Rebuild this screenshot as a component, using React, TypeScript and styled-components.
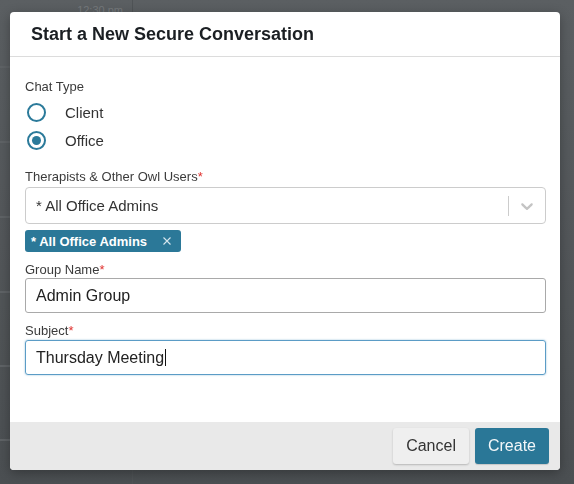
import React from "react";
import styled, { createGlobalStyle } from "styled-components";

const GlobalStyle = createGlobalStyle`
  * { box-sizing: border-box; }
  html, body { margin: 0; padding: 0; height: 100%; overflow: hidden; }
  body {
    font-family: "Liberation Sans", Arial, Helvetica, sans-serif;
    background: #53575a;
  }
`;

/* ---------- Underlying (dimmed) page ---------- */
const Page = styled.div`
  display: flex;
  height: 484px;
  background: linear-gradient(#5b5f62, #4b4f52);
`;

const Sidebar = styled.div`
  width: 133px;
  display: flex;
  flex-direction: column;
  border-right: 1px solid #4f5356;
`;

const SideRow = styled.div<{ $h: number }>`
  height: ${(p) => p.$h}px;
  flex: none;
  border-bottom: 2px solid #5f6366;
  display: flex;
  justify-content: flex-end;
  padding: 4px 9px 0 0;
`;

const Stamp = styled.span`
  font-size: 11px;
  line-height: 13px;
  color: #75797c;
`;

const MainArea = styled.div`
  flex: 1;
`;

/* ---------- Modal ---------- */
const Overlay = styled.div`
  position: fixed;
  inset: 0;
  padding: 12px 0 0 10px;
`;

const Modal = styled.div`
  width: 550px;
  height: 458px;
  background: #fff;
  border-radius: 4px;
  overflow: hidden;
  display: flex;
  flex-direction: column;
  box-shadow: 0 3px 12px rgba(0, 0, 0, 0.3);
`;

const Header = styled.div`
  height: 45px;
  flex: none;
  display: flex;
  align-items: center;
  padding: 0 0 0 21px;
  border-bottom: 1px solid #dcdcdc;
`;

const Title = styled.h1`
  margin: 0;
  font-size: 18px;
  line-height: 44px;
  font-weight: 700;
  color: #1b1f23;
`;

const Body = styled.div`
  flex: 1;
  display: flex;
  flex-direction: column;
  padding: 22px 14px 0 15px;
`;

const Label = styled.div<{ $mt?: number }>`
  font-size: 13px;
  line-height: 16px;
  color: #3b3b3b;
  margin-top: ${(p) => p.$mt ?? 0}px;
`;

const Req = styled.span`
  color: #e0322f;
`;

const RadioGroup = styled.div`
  display: flex;
  flex-direction: column;
  margin-top: 3px;
`;

const RadioRow = styled.label`
  height: 28px;
  display: flex;
  align-items: center;
  padding-left: 2px;
  gap: 19px;
  font-size: 15px;
  color: #333;
`;

const RadioCircle = styled.span<{ $checked?: boolean }>`
  width: 19px;
  height: 19px;
  border-radius: 50%;
  border: 2px solid #2b7a9a;
  display: flex;
  align-items: center;
  justify-content: center;
  flex: none;
  &::after {
    content: "";
    width: 9px;
    height: 9px;
    border-radius: 50%;
    background: ${(p) => (p.$checked ? "#2b7a9a" : "transparent")};
  }
`;

const Select = styled.div`
  margin-top: 2px;
  height: 37px;
  border: 1px solid #cccccc;
  border-radius: 4px;
  display: flex;
  align-items: center;
`;

const SelectValue = styled.div`
  flex: 1;
  padding-left: 10px;
  font-size: 15px;
  color: #333;
`;

const IndicatorSep = styled.span`
  width: 1px;
  height: 20px;
  background: #cccccc;
`;

const Indicator = styled.div`
  width: 36px;
  display: flex;
  align-items: center;
  justify-content: center;
`;

const TagRow = styled.div`
  display: flex;
  margin-top: 6px;
`;

const Tag = styled.div`
  height: 22px;
  display: flex;
  align-items: center;
  background: #2b7898;
  border-radius: 3px;
  padding: 0 10px 0 6px;
  color: #fff;
  font-size: 13px;
  font-weight: 700;
`;

const TagX = styled.svg`
  margin-left: 16px;
`;

const Field = styled.div<{ $focused?: boolean; $mt?: number }>`
  margin-top: ${(p) => p.$mt ?? 0}px;
  height: 35px;
  border: 1px solid ${(p) => (p.$focused ? "#5b9cc6" : "#a9a9a9")};
  box-shadow: ${(p) => (p.$focused ? "0 0 2px 0 rgba(91,156,198,0.7)" : "none")};
  border-radius: 3px;
  display: flex;
  align-items: center;
  padding: 0 10px;
  font-size: 16px;
  color: #222;
`;

const Caret = styled.span`
  width: 1px;
  height: 17px;
  background: #111;
  margin-left: 1px;
`;

const Footer = styled.div`
  height: 48px;
  flex: none;
  background: #e9e9e9;
  display: flex;
  align-items: center;
  justify-content: flex-end;
  gap: 6px;
  padding: 0 11px;
`;

const Button = styled.button<{ $primary?: boolean }>`
  height: 36px;
  padding: 0 13px;
  border: none;
  border-radius: 3px;
  font-family: inherit;
  font-size: 16px;
  background: ${(p) => (p.$primary ? "#2a7797" : "#efefef")};
  color: ${(p) => (p.$primary ? "#f3f7f9" : "#333")};
  box-shadow: ${(p) => (p.$primary ? "0 1px 1px rgba(0,0,0,0.15)" : "0 1px 2px rgba(0,0,0,0.22)")};
`;

export default function App() {
  const rows = [68, 75, 75, 75, 74, 74, 60];
  return (
    <>
      <GlobalStyle />
      <Page>
        <Sidebar>
          {rows.map((h, i) => (
            <SideRow key={i} $h={h}>
              {i === 0 && <Stamp>12:30 pm</Stamp>}
            </SideRow>
          ))}
        </Sidebar>
        <MainArea />
      </Page>
      <Overlay>
        <Modal>
          <Header>
            <Title>Start a New Secure Conversation</Title>
          </Header>
          <Body>
            <Label>Chat Type</Label>
            <RadioGroup>
              <RadioRow>
                <RadioCircle />
                Client
              </RadioRow>
              <RadioRow>
                <RadioCircle $checked />
                Office
              </RadioRow>
            </RadioGroup>
            <Label $mt={15}>
              Therapists &amp; Other Owl Users<Req>*</Req>
            </Label>
            <Select>
              <SelectValue>* All Office Admins</SelectValue>
              <IndicatorSep />
              <Indicator>
                <svg width="20" height="20" viewBox="0 0 20 20">
                  <path
                    fill="#c4c4c4"
                    d="M4.516 7.548c0.436-0.446 1.043-0.481 1.576 0l3.908 3.747 3.908-3.747c0.533-0.481 1.141-0.446 1.574 0 0.436 0.445 0.408 1.197 0 1.615-0.406 0.418-4.695 4.502-4.695 4.502-0.217 0.223-0.502 0.335-0.787 0.335s-0.57-0.112-0.789-0.335c0 0-4.287-4.084-4.695-4.502s-0.436-1.17 0-1.615z"
                  />
                </svg>
              </Indicator>
            </Select>
            <TagRow>
              <Tag>
                * All Office Admins
                <TagX width="8" height="8" viewBox="0 0 8 8">
                  <path d="M0.5 0.5 L7.5 7.5 M7.5 0.5 L0.5 7.5" stroke="#d6e6ee" strokeWidth="1.1" />
                </TagX>
              </Tag>
            </TagRow>
            <Label $mt={10}>
              Group Name<Req>*</Req>
            </Label>
            <Field>Admin Group</Field>
            <Label $mt={10}>
              Subject<Req>*</Req>
            </Label>
            <Field $focused $mt={1}>
              Thursday Meeting
              <Caret />
            </Field>
          </Body>
          <Footer>
            <Button>Cancel</Button>
            <Button $primary>Create</Button>
          </Footer>
        </Modal>
      </Overlay>
    </>
  );
}
